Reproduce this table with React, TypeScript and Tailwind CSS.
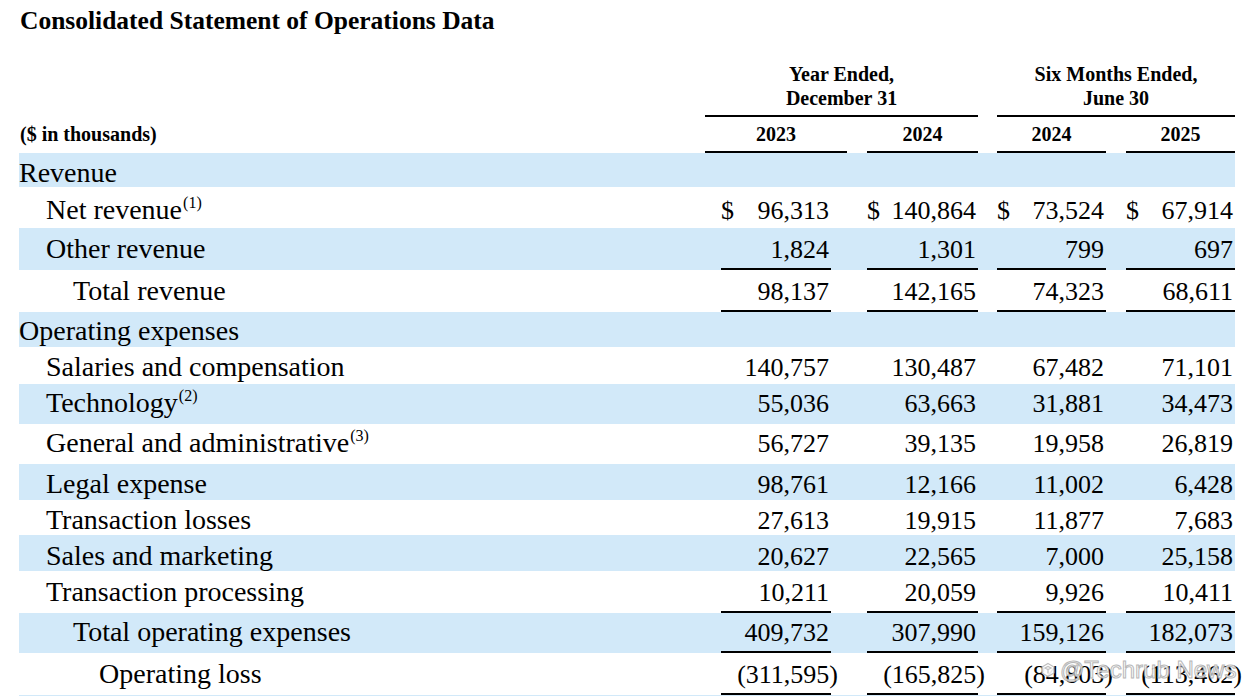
type Row = {
  label: string;
  sup?: string;
  indent: string;
  h: string;
  pb: string;
  shaded?: boolean;
  vals: string[];
  dollar?: boolean;
  line?: boolean;
};

const rows: Row[] = [
  { label: "Revenue", indent: "pl-0", h: "h-[34px]", pb: "pb-[0px]", shaded: true, vals: [] },
  { label: "Net revenue", sup: "(1)", indent: "pl-[27px]", h: "h-[41px]", pb: "pb-[4px]", vals: ["96,313", "140,864", "73,524", "67,914"], dollar: true },
  { label: "Other revenue", indent: "pl-[27px]", h: "h-[42px]", pb: "pb-[7px]", shaded: true, vals: ["1,824", "1,301", "799", "697"], line: true },
  { label: "Total revenue", indent: "pl-[54px]", h: "h-[42px]", pb: "pb-[7px]", vals: ["98,137", "142,165", "74,323", "68,611"], line: true },
  { label: "Operating expenses", indent: "pl-0", h: "h-[35px]", pb: "pb-[2px]", shaded: true, vals: [] },
  { label: "Salaries and compensation", indent: "pl-[27px]", h: "h-[37px]", pb: "pb-[3px]", vals: ["140,757", "130,487", "67,482", "71,101"] },
  { label: "Technology", sup: "(2)", indent: "pl-[27px]", h: "h-[40px]", pb: "pb-[7px]", shaded: true, vals: ["55,036", "63,663", "31,881", "34,473"] },
  { label: "General and administrative", sup: "(3)", indent: "pl-[27px]", h: "h-[40px]", pb: "pb-[7px]", vals: ["56,727", "39,135", "19,958", "26,819"] },
  { label: "Legal expense", indent: "pl-[27px]", h: "h-[36px]", pb: "pb-[2px]", shaded: true, vals: ["98,761", "12,166", "11,002", "6,428"] },
  { label: "Transaction losses", indent: "pl-[27px]", h: "h-[35px]", pb: "pb-[1px]", vals: ["27,613", "19,915", "11,877", "7,683"] },
  { label: "Sales and marketing", indent: "pl-[27px]", h: "h-[36px]", pb: "pb-[1px]", shaded: true, vals: ["20,627", "22,565", "7,000", "25,158"] },
  { label: "Transaction processing", indent: "pl-[27px]", h: "h-[42px]", pb: "pb-[7px]", vals: ["10,211", "20,059", "9,926", "10,411"], line: true },
  { label: "Total operating expenses", indent: "pl-[54px]", h: "h-[40px]", pb: "pb-[7px]", shaded: true, vals: ["409,732", "307,990", "159,126", "182,073"], line: true },
  { label: "Operating loss", indent: "pl-[80px]", h: "h-[42px]", pb: "pb-[7px]", vals: ["(311,595)", "(165,825)", "(84,803)", "(113,462)"], line: true },
  { label: "", indent: "pl-0", h: "h-[36px]", pb: "pb-[0px]", shaded: true, vals: [] },
];

// column boxes: 705-847, 867-978, 997-1106, 1126-1235
const cols = ["w-[142px] px-[16px]", "w-[111px] ml-[20px]", "w-[109px] ml-[19px]", "w-[109px] ml-[20px]"];
const headCols = ["w-[142px]", "w-[111px] ml-[20px]", "w-[109px] ml-[19px]", "w-[109px] ml-[20px]"];

function Value({ v, dollar }: { v: string; dollar?: boolean }) {
  const neg = v.startsWith("(");
  return (
    <>
      <span>{dollar ? "$" : ""}</span>
      <span className={neg ? "-mr-[9px]" : ""}>{v}</span>
    </>
  );
}

export default function App() {
  return (
    <div className="relative w-[1254px] h-[696px] overflow-hidden bg-white text-black font-['Liberation_Serif','Times_New_Roman',serif]">
      {/* Title */}
      <div className="h-[62px] pt-[8px] pl-[20px]">
        <h1 className="text-[25.5px] leading-none font-bold">Consolidated Statement of Operations Data</h1>
      </div>

      {/* Group headers */}
      <div className="flex h-[55px] ml-[19px] w-[1216px] text-[20px] leading-[24px] font-bold">
        <div className="w-[686px]" />
        <div className="w-[273px] text-center shadow-[inset_0_-2px_0_#000]">
          Year Ended,
          <br />
          December 31
        </div>
        <div className="w-[238px] ml-[19px] text-center shadow-[inset_0_-2px_0_#000]">
          Six Months Ended,
          <br />
          June 30
        </div>
      </div>

      {/* Years */}
      <div className="flex h-[36px] ml-[19px] w-[1216px] text-[20px] leading-[20px] font-bold">
        <div className="w-[686px] pt-[7px] pl-px">($ in thousands)</div>
        {["2023", "2024", "2024", "2025"].map((y, i) => (
          <div key={i} className={`${headCols[i]} pt-[7px] text-center shadow-[inset_0_-2px_0_#000]`}>
            {y}
          </div>
        ))}
      </div>

      {/* Body */}
      {rows.map((r, i) => (
        <div key={i} className={`flex ml-[19px] w-[1216px] ${r.h} ${r.shaded ? "bg-[#d2e9f9]" : ""}`}>
          <div className={`w-[686px] h-full flex items-end ${r.indent} ${r.pb}`}>
            <span className="text-[28px] leading-none whitespace-nowrap">
              {r.label}
              {r.sup && <span className="relative -top-[11px] ml-px text-[16px]">{r.sup}</span>}
            </span>
          </div>
          {r.vals.map((v, j) => (
            <div key={j} className={`${cols[j]} h-full flex`}>
              <div
                className={`flex-1 h-full flex items-end justify-between pr-[2px] text-[26px] leading-none whitespace-nowrap ${r.pb} ${
                  r.line ? "shadow-[inset_0_-2px_0_#000]" : ""
                }`}
              >
                <Value v={v} dollar={r.dollar} />
              </div>
            </div>
          ))}
        </div>
      ))}

      {/* watermark */}
      <div className="absolute left-[1040px] top-[658px] flex items-center gap-[4px] opacity-90">
        <svg width="16" height="16" viewBox="0 0 16 16" fill="none" stroke="#b8b8b8" strokeWidth="1.2">
          <path d="M8 1.5 L14 5 L14 11 L8 14.5 L2 11 L2 5 Z" fill="#fff" />
          <path d="M5 6 L8 4.5 L11 6 L8 7.5 Z M8 7.5 L8 11.5" />
        </svg>
        <span className="text-[24px] leading-none text-white font-['Liberation_Sans',sans-serif] [-webkit-text-stroke:1px_#b0b0b0]">
          @Techrub News
        </span>
      </div>
    </div>
  );
}
